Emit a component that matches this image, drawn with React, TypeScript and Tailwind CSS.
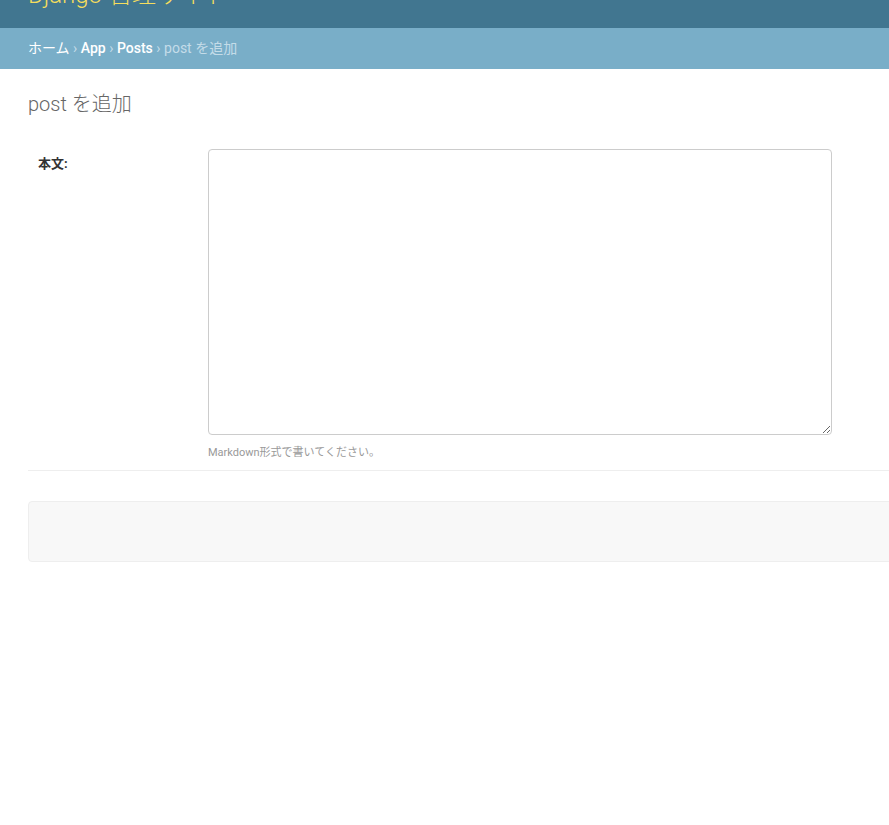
import React from "react";

const font = { fontFamily: 'Roboto, "Noto Sans CJK JP", sans-serif' };

export default function App() {
  return (
    <div className="w-full min-h-[825px] overflow-hidden bg-white text-[#333]" style={font}>
      <div className="min-w-[1100px]">
        {/* header, page is scrolled so its top is cut off */}
        <div className="h-[28px] overflow-hidden bg-[#417690] px-[28px]">
          <h1 className="-mt-[19px] text-[24px] font-light leading-[28px] text-[#f5dd5d]">
            Django 管理サイト
          </h1>
        </div>

        {/* breadcrumbs */}
        <div className="flex h-[41px] items-center bg-[#79aec8] px-[28px] text-[14px] text-[#c4dce8]">
          <a className="text-white">ホーム</a>
          <span className="mx-[3.5px]">›</span>
          <a className="font-medium text-white">App</a>
          <span className="mx-[3.5px]">›</span>
          <a className="font-medium text-white">Posts</a>
          <span className="mx-[3.5px]">›</span>
          <span>post を追加</span>
        </div>

        {/* content */}
        <div className="px-[28px] pt-[20px]">
          <h1 className="mb-[20px] text-[20px] font-light leading-[30px] text-[#666]">post を追加</h1>

          <form>
            <fieldset>
              <div className="flex border-b border-[#eee] p-[10px]">
                <label className="w-[160px] shrink-0 pt-[4px] text-[13px] font-bold leading-[22px] text-[#333]">
                  本文:
                </label>
                <div className="ml-[10px]">
                  <textarea className="block h-[286px] w-[624px] rounded-[4px] border border-[#ccc] bg-white p-[5px] text-[13px] outline-none" />
                  <div className="pt-[11px] text-[11px] leading-[14px] text-[#999]">
                    Markdown形式で書いてください。
                  </div>
                </div>
              </div>
            </fieldset>

            <div className="mt-[30px] h-[61px] rounded-[4px] border border-[#eee] bg-[#f8f8f8]" />
          </form>
        </div>
      </div>
    </div>
  );
}
